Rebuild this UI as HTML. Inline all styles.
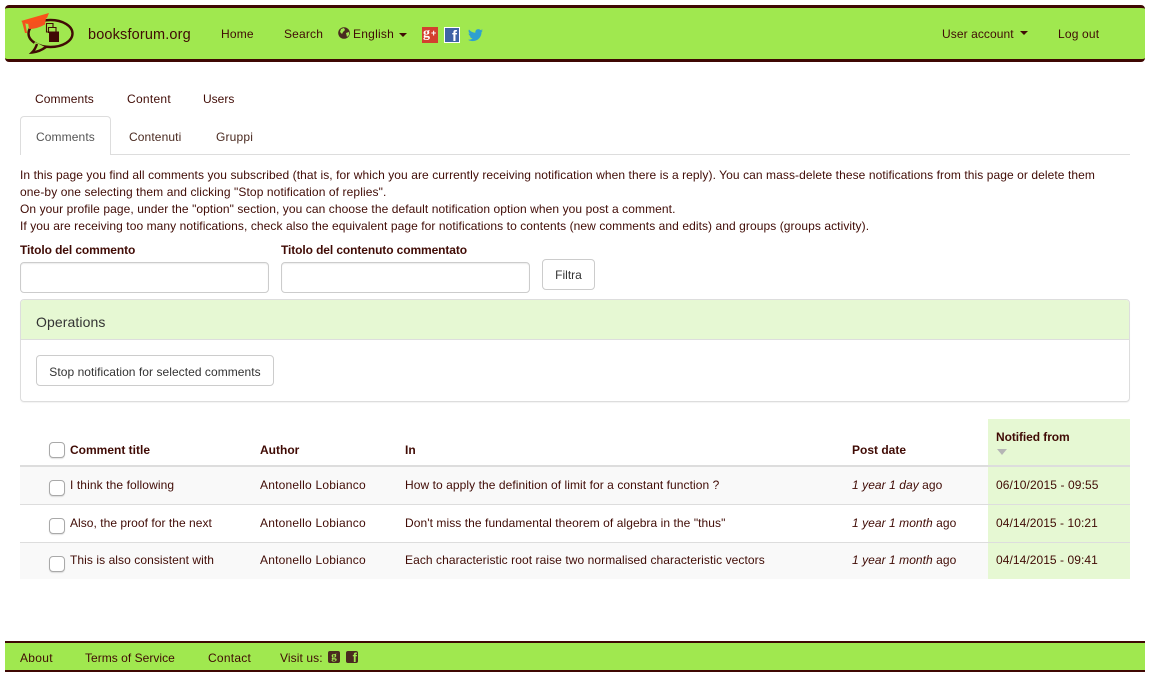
<!DOCTYPE html>
<html><head><meta charset="utf-8"><title>booksforum.org</title>
<style>
html,body{margin:0;padding:0;background:#fff}
body{width:1151px;height:683px;position:relative;overflow:hidden;font-family:"Liberation Sans",sans-serif;font-size:12px;color:#400b05}
.t{position:absolute;white-space:nowrap;line-height:16px;letter-spacing:.08px}
.b{font-weight:bold;letter-spacing:0}
.box{position:absolute;box-sizing:border-box}
.cb{position:absolute;box-sizing:border-box;width:16px;height:16px;border:1px solid #a9a9a9;border-radius:4px;background:#fff;box-shadow:0 1px 1px rgba(0,0,0,.12)}
.caret{position:absolute;width:0;height:0;border-left:4px solid transparent;border-right:4px solid transparent;border-top:4px solid #400b05}
i{font-style:italic}
.a{letter-spacing:.21px}
</style></head><body>

<!-- NAVBAR -->
<div class="box" style="left:5px;top:5px;width:1140px;height:57px;background:#a0e84f;border-top:3px solid #3f0803;border-bottom:3px solid #3f0803;border-radius:4px"></div>
<svg class="box" style="left:20px;top:11px" width="56" height="46" viewBox="0 0 56 46">
<ellipse cx="30.500" cy="22.500" rx="22" ry="13.500" fill="none" stroke="#400b05" stroke-width="2.400"/>
<path d="M15 31 L11 38 L25 36 Z" fill="#a0e84f"/>
<path d="M17 33 C16 36 14.500 39 12 41.500 C17 41 22 39 26 36" fill="none" stroke="#400b05" stroke-width="2.400"/>
<path d="M26.500 12.500h6.500v8.500h-6.500z" fill="#a0e84f" stroke="#400b05" stroke-width="1.100"/>
<path d="M28.500 16.500h7.500v5h-7.500z" fill="#a0e84f" stroke="#400b05" stroke-width="1.100"/>
<rect x="29" y="20.500" width="10" height="10.500" fill="#400b05"/>
<path d="M8 12 L9 18 Q17 18 25 13.500 L26 7 Z" fill="#f4511e"/>
<path d="M1 10 L29 2 L27 7 L7 13 Z" fill="#f9521a"/>
<path d="M2 10.500 L5 22 L7 22 L5 10 Z" fill="#f4511e"/>
</svg>
<div class="t" style="left:88px;top:26px;font-size:14.500px;line-height:18px;letter-spacing:.15px">booksforum.org</div>
<div class="t" style="left:221px;top:26px;letter-spacing:.2px">Home</div>
<div class="t" style="left:284px;top:26px;letter-spacing:.17px">Search</div>
<svg class="box" style="left:338px;top:27px" width="12" height="12" viewBox="0 0 12 12"><circle cx="6" cy="6" r="5.800" fill="#4a2a20"/><path d="M3 2l3-1 1 2-2 2-1 2-2-2zM8 6l3-1 0 3-2 2z" fill="#a0e84f"/></svg>
<div class="t" style="left:353px;top:26px;letter-spacing:.25px">English</div>
<div class="caret" style="left:399px;top:33px"></div>
<div class="box" style="left:422px;top:27px;width:16px;height:16px;background:#d3402f;color:#fff;overflow:hidden"><span style="position:absolute;left:1px;top:0;font:bold 14px/14px 'Liberation Serif',serif">g</span><span style="position:absolute;left:9px;top:2px;font:bold 9px/9px 'Liberation Sans',sans-serif">+</span></div>
<div class="box" style="left:444px;top:27px;width:16px;height:16px;background:#fff;padding:1px"><div style="width:14px;height:14px;background:#3f62a6;color:#fff;font:bold 15px/17px 'Liberation Sans',sans-serif;text-align:right;padding-right:2px;box-sizing:border-box;overflow:hidden">f</div></div>
<svg class="box" style="left:467px;top:28px" width="16" height="14" viewBox="0 0 16 14"><path d="M16 2.500c-.6.3-1.100.4-1.700.5.600-.4 1-.9 1.200-1.600-.6.300-1.200.6-1.900.7C13 1.500 12.200 1.100 11.300 1.100 9.300 1.100 8 2.900 8.400 4.800 5.900 4.700 3.600 3.500 2 1.500 1.200 2.900 1.600 4.700 3 5.600c-.5 0-1-.1-1.400-.4 0 1.500 1 2.800 2.500 3.100-.4.100-.9.100-1.300 0 .4 1.200 1.500 2.100 2.800 2.200C4.300 11.500 2.700 11.900 1 11.700c1.400.9 3 1.400 4.700 1.400 5.700 0 9-4.800 8.800-9.100.6-.5 1.100-1 1.500-1.500z" fill="#2f9fd0"/></svg>
<div class="t" style="left:942px;top:26px">User account</div>
<div class="caret" style="left:1020px;top:31px"></div>
<div class="t" style="left:1058px;top:26px;letter-spacing:.17px">Log out</div>

<!-- TABS -->
<div class="t" style="left:35px;top:91px;letter-spacing:.11px">Comments</div>
<div class="t" style="left:127px;top:91px;letter-spacing:.28px">Content</div>
<div class="t" style="left:203px;top:91px;letter-spacing:0">Users</div>

<div class="box" style="left:20px;top:154px;width:1110px;height:1px;background:#ddd"></div>
<div class="box" style="left:20px;top:116px;width:91px;height:39px;background:#fff;border:1px solid #ddd;border-bottom:0;border-radius:4px 4px 0 0"></div>
<div class="t" style="left:36px;top:129px;color:#555;letter-spacing:.11px">Comments</div>
<div class="t" style="left:129px;top:129px;color:#4a2a20;letter-spacing:.11px">Contenuti</div>
<div class="t" style="left:216px;top:129px;color:#4a2a20;letter-spacing:.17px">Gruppi</div>

<!-- INTRO -->
<div class="t" style="left:20px;top:167px;letter-spacing:.077px">In this page you find all comments you subscribed (that is, for which you are currently receiving notification when there is a reply). You can mass-delete these notifications from this page or delete them</div>
<div class="t" style="left:20px;top:184px;letter-spacing:.1px">one-by one selecting them and clicking "Stop notification of replies".</div>
<div class="t" style="left:20px;top:201px;letter-spacing:.082px">On your profile page, under the "option" section, you can choose the default notification option when you post a comment.</div>
<div class="t" style="left:20px;top:218px;letter-spacing:.075px">If you are receiving too many notifications, check also the equivalent page for notifications to contents (new comments and edits) and groups (groups activity).</div>

<!-- FILTER -->
<div class="t b" style="left:20px;top:242px;letter-spacing:-.1px">Titolo del commento</div>
<div class="t b" style="left:281px;top:242px;letter-spacing:-.1px">Titolo del contenuto commentato</div>
<div class="box" style="left:20px;top:262px;width:249px;height:31px;border:1px solid #ccc;border-radius:4px;box-shadow:inset 0 1px 1px rgba(0,0,0,.075)"></div>
<div class="box" style="left:281px;top:262px;width:249px;height:31px;border:1px solid #ccc;border-radius:4px;box-shadow:inset 0 1px 1px rgba(0,0,0,.075)"></div>
<div class="box" style="left:542px;top:259px;width:53px;height:31px;border:1px solid #ccc;border-radius:4px;background:#fff;text-align:center;line-height:31px;color:#333">Filtra</div>

<!-- PANEL -->
<div class="box" style="left:20px;top:299px;width:1110px;height:103px;border:1px solid #ddd;border-radius:4px;box-shadow:0 1px 1px rgba(0,0,0,.05)"></div>
<div class="box" style="left:21px;top:300px;width:1108px;height:40px;background:#e6f8d3;border-bottom:1px solid #ddd;border-radius:3px 3px 0 0"></div>
<div class="t" style="left:36px;top:313px;font-size:14px;line-height:18px;color:#333;letter-spacing:.1px">Operations</div>
<div class="box" style="left:36px;top:355px;width:238px;height:31px;border:1px solid #ccc;border-radius:4px;background:#fff;text-align:center;line-height:31px;padding-top:1px;color:#333;letter-spacing:.05px">Stop notification for selected comments</div>

<!-- TABLE -->
<div class="box" style="left:988px;top:419px;width:142px;height:160px;background:#e6f8d3"></div>
<div class="box" style="left:20px;top:467px;width:968px;height:37px;background:#f9f9f9"></div>
<div class="box" style="left:20px;top:543px;width:968px;height:36px;background:#f9f9f9"></div>
<div class="box" style="left:20px;top:465px;width:1110px;height:2px;background:#ddd"></div>
<div class="box" style="left:20px;top:504px;width:1110px;height:1px;background:#ddd"></div>
<div class="box" style="left:20px;top:542px;width:1110px;height:1px;background:#ddd"></div>

<div class="cb" style="left:49px;top:442px"></div>
<div class="t b" style="left:70px;top:442px">Comment title</div>
<div class="t b" style="left:260px;top:442px">Author</div>
<div class="t b" style="left:405px;top:442px">In</div>
<div class="t b" style="left:852px;top:442px">Post date</div>
<div class="t b" style="left:996px;top:429px;letter-spacing:-.08px">Notified from</div>
<div class="box" style="left:997px;top:449px;width:0;height:0;border-left:5px solid transparent;border-right:5px solid transparent;border-top:6px solid #b5b5b5"></div>

<div class="cb" style="left:49px;top:480px"></div>
<div class="t" style="left:70px;top:477px;letter-spacing:.1px">I think the following</div>
<div class="t a" style="left:260px;top:477px">Antonello Lobianco</div>
<div class="t" style="left:405px;top:477px;letter-spacing:.067px">How to apply the definition of limit for a constant function ?</div>
<div class="t" style="left:852px;top:477px;letter-spacing:.06px"><i>1 year 1 day</i> ago</div>
<div class="t" style="left:996px;top:477px;letter-spacing:.1px">06/10/2015 - 09:55</div>

<div class="cb" style="left:49px;top:518px"></div>
<div class="t" style="left:70px;top:515px;letter-spacing:.04px">Also, the proof for the next</div>
<div class="t a" style="left:260px;top:515px">Antonello Lobianco</div>
<div class="t" style="left:405px;top:515px;letter-spacing:.07px">Don't miss the fundamental theorem of algebra in the "thus"</div>
<div class="t" style="left:852px;top:515px;letter-spacing:.05px"><i>1 year 1 month</i> ago</div>
<div class="t" style="left:996px;top:515px;letter-spacing:.06px">04/14/2015 - 10:21</div>

<div class="cb" style="left:49px;top:556px"></div>
<div class="t" style="left:70px;top:552px;letter-spacing:.07px">This is also consistent with</div>
<div class="t a" style="left:260px;top:552px">Antonello Lobianco</div>
<div class="t" style="left:405px;top:552px;letter-spacing:.073px">Each characteristic root raise two normalised characteristic vectors</div>
<div class="t" style="left:852px;top:552px;letter-spacing:.05px"><i>1 year 1 month</i> ago</div>
<div class="t" style="left:996px;top:552px;letter-spacing:.06px">04/14/2015 - 09:41</div>

<!-- FOOTER -->
<div class="box" style="left:5px;top:641px;width:1140px;height:31px;background:#a0e84f;border-top:2px solid #3f0803;border-bottom:2px solid #3f0803"></div>
<div class="t" style="left:20px;top:650px;letter-spacing:.3px">About</div>
<div class="t" style="left:85px;top:650px;letter-spacing:.03px">Terms of Service</div>
<div class="t" style="left:208px;top:650px;letter-spacing:.25px">Contact</div>
<div class="t" style="left:280px;top:650px;letter-spacing:.1px">Visit us:</div>
<div class="box" style="left:328px;top:651px;width:12px;height:12px;background:#4a2a20;border-radius:2px;color:#a0e84f;font:bold 11px/11px 'Liberation Serif',serif;text-align:center">g</div>
<div class="box" style="left:346px;top:651px;width:12px;height:12px;background:#4a2a20;border-radius:2px;color:#a0e84f;font:bold 13px/14px 'Liberation Sans',sans-serif;text-align:right;padding-right:1px;overflow:hidden">f</div>
</body></html>
